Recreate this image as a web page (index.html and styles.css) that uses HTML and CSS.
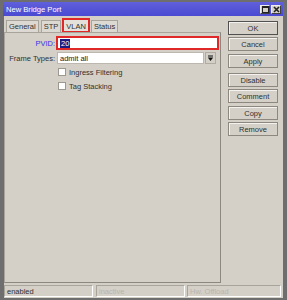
FILE: index.html
```html
<!DOCTYPE html>
<html>
<head>
<meta charset="utf-8">
<link rel="stylesheet" href="styles.css">
</head>
<body>
<div class="window">
  <div class="titlebar">
    <span class="title">New Bridge Port</span>
    <span class="tbtn"><svg width="7" height="7" viewBox="0 0 7 7"><rect x="0.5" y="0.5" width="6" height="6" fill="none" stroke="#202020" stroke-width="1"/><rect x="0" y="0" width="7" height="2" fill="#202020"/></svg></span>
    <span class="tbtn"><svg width="7" height="7" viewBox="0 0 7 7"><path d="M1 1L6 6M6 1L1 6" stroke="#202020" stroke-width="1.6"/></svg></span>
  </div>
  <div class="body">
    <div class="main">
      <div class="left">
        <div class="tabs">
          <span class="tab">General</span>
          <span class="tab">STP</span>
          <span class="tab active">VLAN</span>
          <span class="tab">Status</span>
        </div>
        <div class="panel">
          <div class="row">
            <span class="label blue">PVID:</span>
            <span class="input hl"><span class="sel">20</span></span>
          </div>
          <div class="row row2">
            <span class="label">Frame Types:</span>
            <span class="select">
              <span class="selval">admit all</span>
              <span class="arrow"><svg width="7" height="7" viewBox="0 0 7 7"><rect x="1" y="0.5" width="5" height="1" fill="#101010"/><path d="M0.8 2.5H6.2L3.5 6Z" fill="#101010"/></svg></span>
            </span>
          </div>
          <div class="check first"><span class="box"></span><span>Ingress Filtering</span></div>
          <div class="check"><span class="box"></span><span>Tag Stacking</span></div>
        </div>
      </div>
      <div class="buttons">
        <span class="btn default">OK</span>
        <span class="btn">Cancel</span>
        <span class="btn g3">Apply</span>
        <span class="btn sep">Disable</span>
        <span class="btn">Comment</span>
        <span class="btn g3">Copy</span>
        <span class="btn">Remove</span>
      </div>
    </div>
    <div class="status">
      <span class="cell c1">enabled</span>
      <span class="cell c2 dim">inactive</span>
      <span class="cell c3 dim">Hw. Offload</span>
    </div>
  </div>
</div>
</body>
</html>
```

FILE: styles.css
```css
* { box-sizing: border-box; }
html, body { margin: 0; padding: 0; background: #ffffff; }
body {
  font-family: "Liberation Sans", Arial, sans-serif;
  font-size: 7.5px;
  color: #303030;
}
.window {
  width: 287px;
  height: 300px;
  background: #6e6e6e;
  padding: 2px 4px 2px 4px;
  display: flex;
  flex-direction: column;
}
.titlebar {
  height: 14px;
  margin-left: -1px;
  background: linear-gradient(#6060dc, #4a4ad2);
  display: flex;
  align-items: center;
  padding: 0 2px 0 3px;
  gap: 1px;
}
.title {
  flex: 1;
  color: #ffffff;
  font-size: 7.6px;
}
.tbtn {
  width: 10px;
  height: 9px;
  background: #d4d0c8;
  border: 1px solid #404040;
  border-top-color: #f0f0f0;
  border-left-color: #f0f0f0;
  display: flex;
  align-items: center;
  justify-content: center;
}
.body {
  flex: 1;
  background: #d4d0c8;
  display: flex;
  flex-direction: column;
}
.main {
  flex: 1;
  display: flex;
  padding: 4px 5px 2px 0;
}
.left {
  width: 217px;
  display: flex;
  flex-direction: column;
}
.tabs {
  display: flex;
  height: 12px;
  padding-left: 2px;
  gap: 2px;
}
.tab {
  height: 12px;
  padding: 0 2px;
  display: flex;
  align-items: center;
  background: #dcd9d2;
  border: 1px solid #a8a49c;
  border-bottom: none;
  color: #303030;
}
.tab.active {
  background: #e4e1db;
  outline: 2px solid #e02828;
  outline-offset: -1px;
  margin-top: -1px;
  height: 13px;
  padding: 0 2px;
}
.panel {
  flex: 1;
  border: 1px solid #a8a49c;
  border-right-color: #8c8880;
  border-bottom-color: #8c8880;
  padding-top: 3px;
}
.row {
  display: flex;
  align-items: center;
  height: 14px;
}
.row2 { margin-top: 2px; height: 12px; }
.label {
  width: 51px;
  text-align: right;
  padding-right: 1px;
  color: #303030;
}
.blue { color: #3434e4; }
.input {
  width: 163px;
  height: 14px;
  background: #ffffff;
  display: flex;
  align-items: center;
  padding-left: 2px;
}
.hl { border: 2px solid #e02828; }
.sel {
  background: #1c1c80;
  color: #ffffff;
  padding: 0 1px;
  line-height: 9px;
}
.select {
  margin-left: 1px;
  width: 159px;
  height: 12px;
  display: flex;
}
.selval {
  flex: 1;
  background: #ffffff;
  border: 1px solid #bcb8b0;
  padding-left: 2px;
  display: flex;
  align-items: center;
  color: #202020;
}
.arrow {
  width: 11px;
  margin-left: 1px;
  background: #d4d0c8;
  border: 1px solid #b0aca4;
  display: flex;
  align-items: center;
  justify-content: center;
}
.check {
  display: flex;
  align-items: center;
  height: 14px;
  padding-left: 53px;
  gap: 3px;
}
.check.first { margin-top: 1px; }
.box {
  width: 8px;
  height: 8px;
  background: #ffffff;
  border: 1px solid #9c988f;
}
.buttons {
  width: 50px;
  margin-left: 7px;
  padding-top: 1px;
  display: flex;
  flex-direction: column;
  gap: 2px;
}
.btn {
  height: 14px;
  display: flex;
  align-items: center;
  justify-content: center;
  background: #d4d0c8;
  border: 1px solid #8c8880;
  box-shadow: inset 1px 1px 0 #f4f2ee;
  color: #303030;
}
.btn.default { border-color: #505050; }
.btn.g3 { margin-top: 1px; }
.btn.sep { margin-top: 3px; }
.status {
  height: 12px;
  margin-bottom: 1px;
  display: flex;
}
.cell {
  height: 12px;
  border: 1px solid #ffffff;
  border-top-color: #a8a49c;
  border-left-color: #a8a49c;
  padding-left: 2px;
  display: flex;
  align-items: center;
  color: #303030;
}
.c1 { width: 89px; }
.c2 { width: 89px; margin-left: 3px; }
.c3 { width: 94px; margin-left: 2px; }
.dim { color: #b8b4ac; }
```
